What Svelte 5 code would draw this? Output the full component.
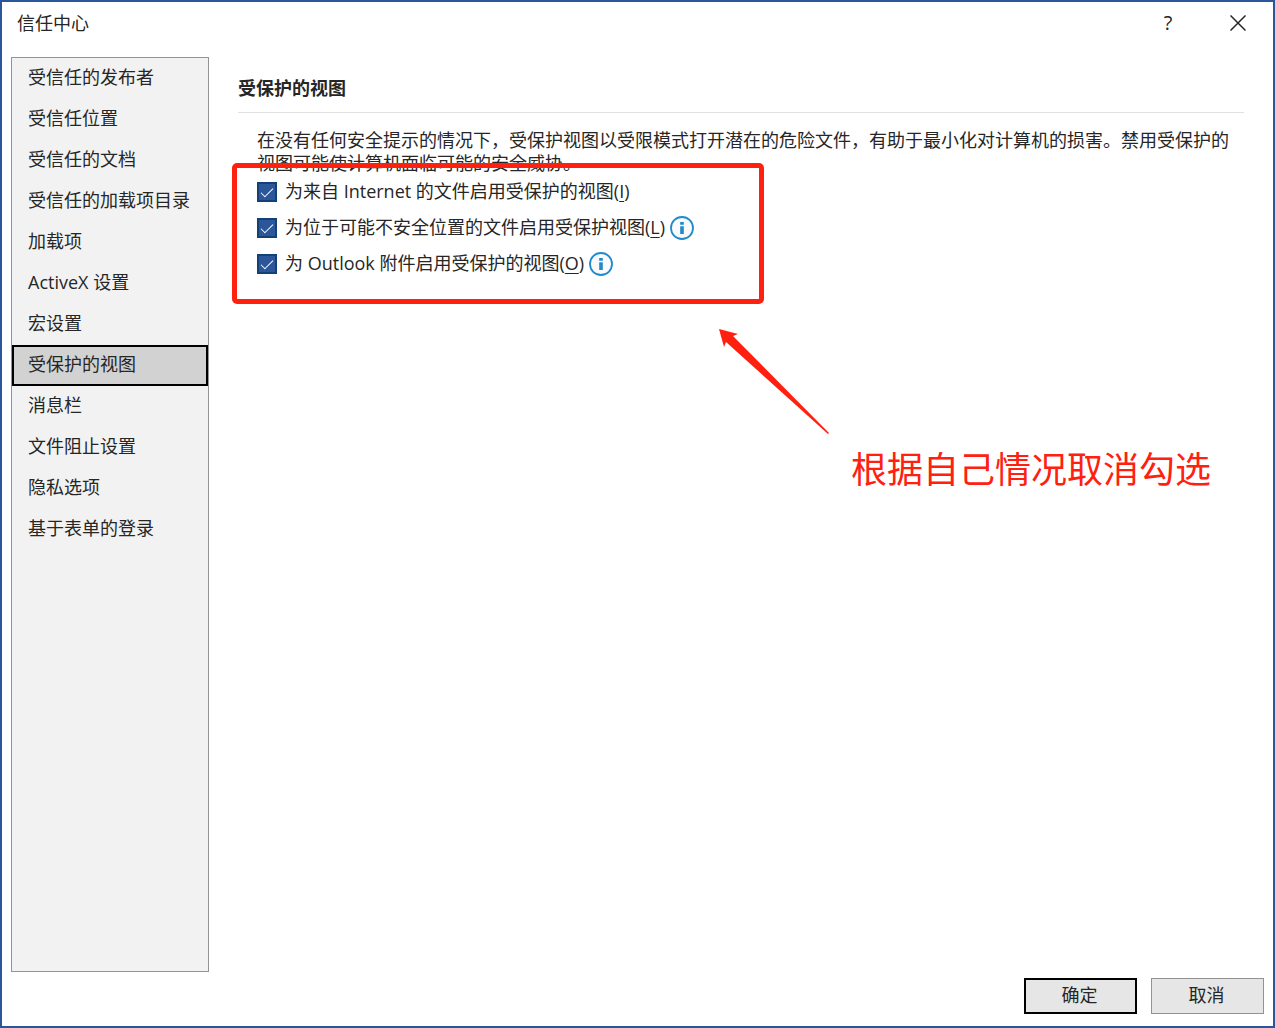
<script lang="ts">
  type Option = { id: string; label: string; key: string; info: boolean; checked: boolean };

  const categories = [
    '受信任的发布者',
    '受信任位置',
    '受信任的文档',
    '受信任的加载项目录',
    '加载项',
    'ActiveX 设置',
    '宏设置',
    '受保护的视图',
    '消息栏',
    '文件阻止设置',
    '隐私选项',
    '基于表单的登录',
  ];

  let selected = $state('受保护的视图');

  let options: Option[] = $state([
    { id: 'internet', label: '为来自 Internet 的文件启用受保护的视图', key: 'I', info: false, checked: true },
    { id: 'location', label: '为位于可能不安全位置的文件启用受保护视图', key: 'L', info: true, checked: true },
    { id: 'outlook', label: '为 Outlook 附件启用受保护的视图', key: 'O', info: true, checked: true },
  ]);
</script>

<div class="dialog">
  <header class="titlebar">
    <h1>信任中心</h1>
    <div class="window-buttons">
      <button class="window-button" aria-label="帮助">?</button>
      <button class="window-button" aria-label="关闭">
        <svg width="16" height="16" viewBox="0 0 16 16">
          <path d="M0.5 0.5 L15.5 15.5 M15.5 0.5 L0.5 15.5" fill="none" stroke="#262626" stroke-width="1.5" />
        </svg>
      </button>
    </div>
  </header>

  <div class="body">
    <nav class="sidebar">
      {#each categories as name (name)}
        <button class="category" class:selected={name === selected} onclick={() => (selected = name)}>
          {name}
        </button>
      {/each}
    </nav>

    <main class="panel">
      <h2>受保护的视图</h2>
      <div class="section">
        <p>
          在没有任何安全提示的情况下，受保护视图以受限模式打开潜在的危险文件，有助于最小化对计算机的损害。禁用受保护的视图可能使计算机面临可能的安全威协。
        </p>

        <div class="options">
          {#each options as option (option.id)}
            <div class="option">
              <input type="checkbox" id={option.id} bind:checked={option.checked} />
              <label for={option.id}>{option.label}(<u>{option.key}</u>)</label>
              {#if option.info}
                <svg class="info" width="24" height="24" viewBox="0 0 24 24">
                  <circle cx="12" cy="12" r="11" fill="#fafafa" stroke="#1e8bcd" stroke-width="1.8" />
                  <path d="M10.2 6h3.6v2.8h-3.6z M10.2 10.2h3.6v7.8h-3.6z" fill="#1e8bcd" />
                </svg>
              {/if}
            </div>
          {/each}

          <div class="frame"></div>
          <svg class="arrow" width="112" height="108" viewBox="0 0 112 108">
            <path d="M1 1 L20 6 L15 8 L111 105 L110 106 L8 14 L6 19 Z" fill="#ff2010" />
          </svg>
          <div class="note">根据自己情况取消勾选</div>
        </div>
      </div>
    </main>
  </div>

  <footer class="actions">
    <button class="action default">确定</button>
    <button class="action">取消</button>
  </footer>
</div>

<style>
  :global(body) {
    background: #fff;
  }

  .dialog {
    box-sizing: border-box;
    min-height: 100vh;
    display: flex;
    flex-direction: column;
    border: 2px solid #2b579a;
    background: #fff;
    color: #262626;
    font-family: 'Open Sans', 'Noto Sans CJK SC', sans-serif;
    font-size: 18px;
    line-height: 24px;
  }

  button {
    font: inherit;
    color: inherit;
    cursor: pointer;
  }

  .titlebar {
    display: flex;
    align-items: center;
    justify-content: space-between;
    height: 42px;
    padding-left: 15px;
  }

  h1 {
    margin: 0;
    font-size: 18px;
    font-weight: 400;
  }

  .window-buttons {
    display: flex;
  }

  .window-button {
    display: flex;
    align-items: center;
    justify-content: center;
    width: 70px;
    height: 42px;
    padding: 0;
    border: 0;
    background: none;
    font-size: 20px;
  }

  .body {
    flex: 1;
    display: flex;
    padding: 13px 29px 0 9px;
  }

  .sidebar {
    box-sizing: border-box;
    flex: none;
    width: 198px;
    display: flex;
    flex-direction: column;
    border: 1px solid #939393;
    background: #f2f2f2;
  }

  .category {
    box-sizing: border-box;
    height: 41px;
    padding: 0 14px 4px;
    border: 2px solid transparent;
    background: none;
    text-align: left;
    white-space: nowrap;
  }

  .category.selected {
    border-color: #000;
    background: #d2d2d2;
  }

  .panel {
    flex: 1;
    min-width: 0;
    padding: 19px 0 0 29px;
  }

  h2 {
    margin: 0;
    padding-bottom: 12px;
    border-bottom: 1px solid #e1e1e1;
    font-size: 18px;
    font-weight: 700;
  }

  .section {
    padding: 16px 0 0 19px;
  }

  p {
    margin: 0 0 -1px;
    line-height: 23px;
  }

  .options {
    position: relative;
  }

  .option {
    display: flex;
    align-items: center;
    height: 36px;
  }

  label {
    padding-bottom: 2px;
  }

  input {
    appearance: none;
    flex: none;
    display: grid;
    place-items: center;
    width: 20px;
    height: 20px;
    margin: 0 8px 0 0;
    border: 2px solid #124078;
    background: #fff;
  }

  input:checked {
    background: #2b579a;
  }

  input:checked::before {
    content: '';
    width: 12px;
    height: 6px;
    margin-bottom: 3px;
    border-left: 1px solid #fff;
    border-bottom: 1px solid #fff;
    box-sizing: border-box;
    transform: rotate(-45deg);
  }

  u {
    text-underline-offset: 3px;
    text-decoration-thickness: 1px;
  }

  .info {
    margin-left: 5px;
  }

  /* red markup drawn over the options */
  .frame {
    position: absolute;
    top: -11px;
    left: -25px;
    width: 532px;
    height: 141px;
    box-sizing: border-box;
    border: 5px solid #ff2010;
    border-radius: 5px;
    pointer-events: none;
  }

  .arrow {
    position: absolute;
    top: 154px;
    left: 461px;
  }

  .note {
    position: absolute;
    top: 272px;
    left: 594px;
    color: #ff2010;
    font-size: 36px;
    line-height: 48px;
    white-space: nowrap;
  }

  .actions {
    display: flex;
    justify-content: flex-end;
    gap: 14px;
    padding: 6px 9px 12px;
  }

  .action {
    box-sizing: border-box;
    width: 113px;
    height: 36px;
    padding: 0 2px 2px 0;
    border: 1px solid #939393;
    background: #e6e6e6;
  }

  .action.default {
    border: 2px solid #000;
  }
</style>
